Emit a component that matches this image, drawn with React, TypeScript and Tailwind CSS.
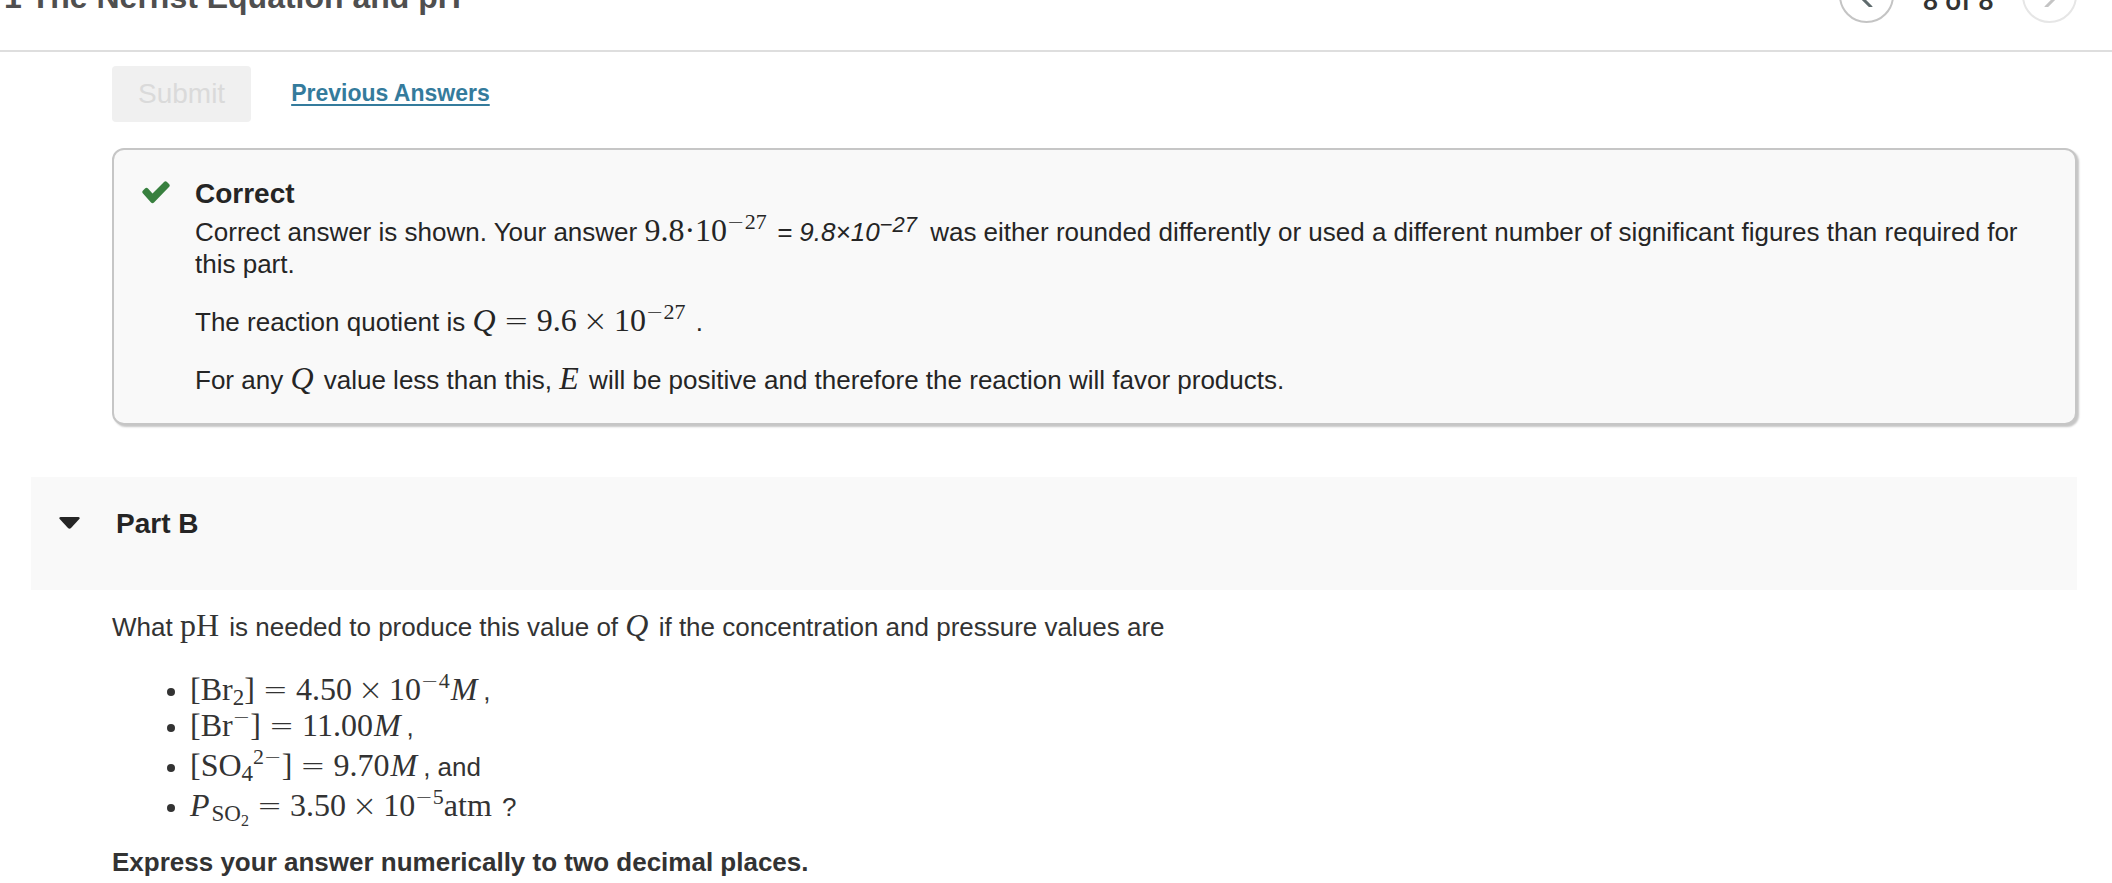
import type { ReactNode } from "react";
import clsx from "clsx";

function Tex({ children }: { children: ReactNode }) {
  return (
    <span className="mr-[3px] font-['Liberation_Serif',serif] text-[32px] leading-[0] whitespace-nowrap">
      {children}
    </span>
  );
}

function Eq() {
  return <span className="mx-2 font-['DejaVu_Sans',sans-serif] text-[30px] font-extralight">=</span>;
}

function Times() {
  return <span className="mx-1.5 font-['DejaVu_Sans',sans-serif] text-[30px] font-extralight">×</span>;
}

function Minus() {
  return <span className="font-['DejaVu_Sans',sans-serif] text-[21px] font-extralight">−</span>;
}

function Sup({ children }: { children: ReactNode }) {
  return <span className="align-[12px] text-[22px]">{children}</span>;
}

function Sub({ children }: { children: ReactNode }) {
  return <span className="align-[-5px] text-[23px]">{children}</span>;
}

function Molar() {
  return <i className="mx-px pr-0.5">M</i>;
}

function NavButton({ direction, disabled }: { direction: "prev" | "next"; disabled?: boolean }) {
  return (
    <button
      type="button"
      disabled={disabled}
      aria-label={direction === "prev" ? "Previous item" : "Next item"}
      className={clsx(
        "flex size-[55px] items-center justify-center rounded-full border-2",
        disabled ? "border-[#e6e6e6] text-[#c4c4c4]" : "border-[#c4c4c4] text-[#5f6b6d]",
      )}
    >
      <svg viewBox="0 0 24 24" className="size-6" fill="none" stroke="currentColor" strokeWidth="3" strokeLinecap="round">
        <path d={direction === "prev" ? "M16 0 L4 12 L16 24" : "M8 0 L20 12 L8 24"} />
      </svg>
    </button>
  );
}

const conditions = [
  {
    id: "br2",
    math: (
      <>
        [Br<Sub>2</Sub>]<Eq />4.50<Times />10
        <Sup>
          <Minus />4
        </Sup>
        <Molar />
      </>
    ),
    after: ",",
  },
  {
    id: "br",
    math: (
      <>
        [Br
        <Sup>
          <Minus />
        </Sup>
        ]<Eq />11.00
        <Molar />
      </>
    ),
    after: ",",
  },
  {
    id: "so4",
    math: (
      <>
        [SO<Sub>4</Sub>
        <Sup>
          2<Minus />
        </Sup>
        ]<Eq />9.70
        <Molar />
      </>
    ),
    after: ", and",
    tall: true,
  },
  {
    id: "pso2",
    math: (
      <>
        <i className="mr-0.5">P</i>
        <Sub>
          SO<span className="align-[-5px] text-base leading-[0]">2</span>
        </Sub>
        <Eq />3.50<Times />10
        <Sup>
          <Minus />5
        </Sup>
        atm
      </>
    ),
    after: " ?",
    tall: true,
  },
];

export default function App() {
  return (
    <div className="min-h-screen overflow-hidden bg-white font-['Liberation_Sans',Arial,sans-serif] text-[26px] leading-8 text-[#333]">
      <header className="-mt-15 flex h-28 items-center justify-between border-b-2 border-[#dedede] pr-[35px]">
        <h1 className="pt-1 pl-1 text-[32px] font-bold text-[#4f4f4f]">1 The Nernst Equation and pH</h1>
        <nav aria-label="Item navigation" className="flex items-center gap-7">
          <NavButton direction="prev" />
          <span className="pt-3 font-['Roboto',sans-serif] text-[28px] font-medium">8 of 8</span>
          <NavButton direction="next" disabled />
        </nav>
      </header>

      <main className="pr-[35px] pl-[31px]">
        <div className="pl-[81px]">
          <div className="mt-3.5 flex items-center gap-10">
            <button type="button" disabled className="h-14 rounded bg-[#f0f0f0] px-[26px] text-[28px] text-[#dadada]">
              Submit
            </button>
            <a href="#" className="pb-0.5 text-[23px] font-bold text-[#347b9c] underline decoration-2 underline-offset-3">
              Previous Answers
            </a>
          </div>

          <section className="mt-[26px] flex rounded-xl border-2 border-[#c6c6c6] bg-[#f9f9f9] pt-7 pr-[26px] pb-[27px] pl-7 text-[#252525] shadow-[2px_2px_2px_#c6c6c6]">
            <svg viewBox="0 0 28 24" className="mt-[3px] h-6 w-7 shrink-0" fill="#38803f">
              <path d="M1 12.500 Q-.5 11 1 9.500 L3 7.500 Q4.500 6 6 7.500 L10.500 12.500 L22 1 Q23.500 -.5 25 1 L27 3 Q28.500 4.500 27 6 L12 21.500 Q10.500 23 9 21.500 Z" />
            </svg>
            <div className="ml-[25px]">
              <h2 className="text-[28px] font-bold">Correct</h2>
              <p className="mt-1.5">
                Correct answer is shown. Your answer{" "}
                <Tex>
                  9.8·10
                  <Sup>
                    <Minus />27
                  </Sup>
                </Tex>{" "}
                <i className="mr-1.5 leading-[0] whitespace-nowrap">
                  = 9.8×10<span className="align-[9px] text-[22px]">−27</span>
                </i>{" "}
                was either rounded differently or used a different number of significant figures than required for
                this part.
              </p>
              <p className="mt-[26px]">
                The reaction quotient is{" "}
                <Tex>
                  <i>Q</i>
                  <Eq />9.6
                  <Times />10
                  <Sup>
                    <Minus />27
                  </Sup>
                </Tex>{" "}
                .
              </p>
              <p className="mt-[26px]">
                For any{" "}
                <Tex>
                  <i>Q</i>
                </Tex>{" "}
                value less than this,{" "}
                <Tex>
                  <i>E</i>
                </Tex>{" "}
                will be positive and therefore the reaction will favor products.
              </p>
            </div>
          </section>
        </div>

        <section>
          <h2 className="mt-[52px] bg-[#f9f9f9] pt-[31px] pb-[50px] pl-7 text-[28px] font-bold text-[#252525]">
            <button type="button" aria-expanded="true" className="flex items-center gap-9">
              <svg viewBox="0 0 21 12" className="mb-0.5 h-3 w-[21px]" fill="currentColor">
                <path d="M1.500 0 H19.500 Q21.500 .5 20.300 2 L12 11 Q10.500 12.500 9 11 L.7 2 Q-.5 .5 1.500 0 Z" />
              </svg>
              Part B
            </button>
          </h2>
          <div className="pl-[81px]">
            <p className="mt-[21px]">
              What <Tex>pH</Tex> is needed to produce this value of{" "}
              <Tex>
                <i>Q</i>
              </Tex>{" "}
              if the concentration and pressure values are
            </p>
            <ul className="mt-[30px] list-disc pl-[78px] leading-9">
              {conditions.map((c) => (
                <li key={c.id} className={clsx(c.tall && "pt-1")}>
                  <Tex>{c.math}</Tex>
                  {c.after}
                </li>
              ))}
            </ul>
            <p className="mt-[21px] font-bold">Express your answer numerically to two decimal places.</p>
          </div>
        </section>
      </main>
    </div>
  );
}
